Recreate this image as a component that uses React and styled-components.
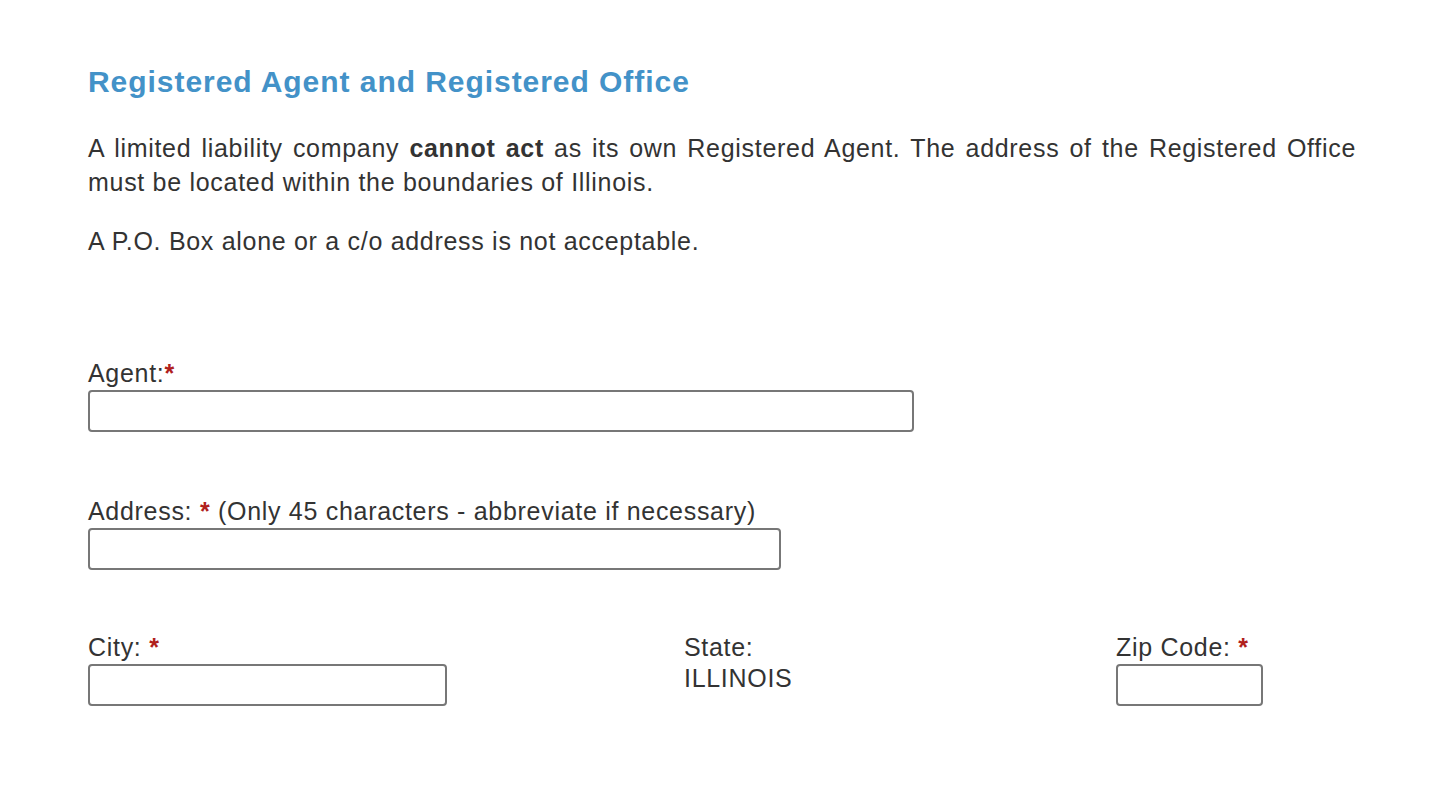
import React from "react";
import styled, { createGlobalStyle } from "styled-components";

const GlobalStyle = createGlobalStyle`
  html, body {
    margin: 0;
    padding: 0;
    background: #ffffff;
  }
  body {
    font-family: "Liberation Sans", Arial, sans-serif;
    color: #333333;
  }
`;

const Page = styled.div`
  padding: 65px 88px 40px 88px;
`;

const Heading = styled.h2`
  margin: 0 0 32px 0;
  font-size: 30px;
  line-height: 34px;
  letter-spacing: 0.95px;
  font-weight: bold;
  color: #4392c8;
`;

const Para = styled.p`
  margin: 0 0 25px 0;
  font-size: 25px;
  line-height: 34px;
  letter-spacing: 0.7px;
  text-align: justify;
`;

const Form = styled.div`
  margin-top: 98px;
  display: flex;
  flex-direction: column;
  gap: 62px;
`;

const Field = styled.div`
  display: flex;
  flex-direction: column;
  align-items: flex-start;
`;

const Label = styled.label`
  font-size: 25px;
  line-height: 34px;
  letter-spacing: 0.7px;
`;

const Req = styled.span`
  color: #b0201c;
  font-weight: bold;
`;

const Input = styled.input`
  box-sizing: border-box;
  width: ${(p) => p.$w}px;
  height: 42px;
  border: 2px solid #777777;
  border-radius: 4px;
  padding: 4px 8px;
  font-size: 20px;
  font-family: inherit;
  background: #fff;
  outline: none;
`;

const Row = styled.div`
  display: grid;
  grid-template-columns: 596px 432px auto;
  margin-top: -2px;
`;

const StateValue = styled.div`
  font-size: 25px;
  line-height: 28px;
  letter-spacing: 0.7px;
`;

export default function App() {
  return (
    <>
      <GlobalStyle />
      <Page>
        <Heading>Registered Agent and Registered Office</Heading>
        <Para>
          A limited liability company <b>cannot act</b> as its own Registered Agent. The
          address of the Registered Office must be located within the boundaries of Illinois.
        </Para>
        <Para>A P.O. Box alone or a c/o address is not acceptable.</Para>
        <Form>
          <Field>
            <Label>
              Agent:<Req>*</Req>
            </Label>
            <Input $w={826} type="text" />
          </Field>
          <Field>
            <Label>
              Address: <Req>*</Req> (Only 45 characters - abbreviate if necessary)
            </Label>
            <Input $w={693} type="text" />
          </Field>
          <Row>
            <Field>
              <Label>
                City: <Req>*</Req>
              </Label>
              <Input $w={359} type="text" />
            </Field>
            <Field>
              <Label>State:</Label>
              <StateValue>ILLINOIS</StateValue>
            </Field>
            <Field>
              <Label>
                Zip Code: <Req>*</Req>
              </Label>
              <Input $w={147} type="text" />
            </Field>
          </Row>
        </Form>
      </Page>
    </>
  );
}
